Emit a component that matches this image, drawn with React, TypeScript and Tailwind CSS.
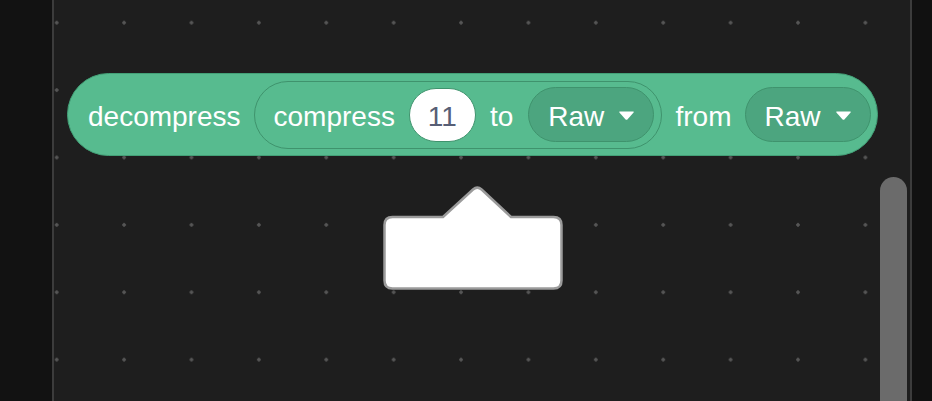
const font = { fontFamily: '"Liberation Sans", Arial, sans-serif' };

function Caret() {
  return (
    <svg width="17" height="11" viewBox="0 0 17 11" className="shrink-0">
      <path d="M2 1.5 H15 Q16.5 1.5 15.4 2.8 L9.6 9.2 Q8.5 10.3 7.4 9.2 L1.6 2.8 Q0.5 1.5 2 1.5 Z" fill="#ffffff" />
    </svg>
  );
}

function Label({ children, className = "" }: { children: string; className?: string }) {
  return <span className={`translate-y-[2px] text-[28px] leading-none text-white ${className}`}>{children}</span>;
}

function Dropdown({ label }: { label: string }) {
  return (
    <div className="flex h-[55px] w-[126px] shrink-0 items-center rounded-full border border-[#3f936d] bg-[#4ca57f] pl-[19px]">
      <Label>{label}</Label>
      <span className="ml-[14px] translate-y-[1px]">
        <Caret />
      </span>
    </div>
  );
}

export default function App() {
  return (
    <div className="flex h-[401px] w-[932px] overflow-hidden bg-[#111111]" style={font}>
      <div className="w-[52px] shrink-0 bg-[#121212]" />
      <div className="w-[2px] shrink-0 bg-[#3c3c3c]" />
      <div className="relative flex-1 overflow-hidden bg-[#1e1e1e] bg-[radial-gradient(circle,#565656_1.5px,transparent_1.9px)] bg-[length:67.4px_67.4px] bg-[position:-31px_-11px]">
        <div className="pl-[13px] pt-[73px]">
          <div className="flex h-[83px] w-[811px] items-center rounded-full border border-[#43a077] bg-[#57bb8f] pl-[20px]">
            <Label>decompress</Label>
            <div className="ml-[13px] flex h-[68px] w-[408px] shrink-0 items-center rounded-full border border-[#3f936d] bg-[#57bb8f] pl-[19px]">
              <Label>compress</Label>
              <div className="ml-[14px] flex h-[54px] w-[67px] shrink-0 items-center justify-center rounded-full border border-[#3f936d] bg-white">
                <span className="translate-y-[2px] text-[28px] leading-none text-[#575e75]">11</span>
              </div>
              <Label className="ml-[14px]">to</Label>
              <div className="ml-[15px]">
                <Dropdown label="Raw" />
              </div>
            </div>
            <Label className="ml-[14px]">from</Label>
            <div className="ml-[13px]">
              <Dropdown label="Raw" />
            </div>
          </div>
        </div>

        <svg width="182" height="108" viewBox="0 0 182 108" className="absolute left-[328px] top-[184px]">
          <path
            d="M10.5 33 H61 L91 5.5 Q95.3 1.8 99.6 5.5 L129 33 H171.5 Q179.5 33 179.5 41 V96.5 Q179.5 104.5 171.5 104.5 H10.5 Q2.5 104.5 2.5 96.5 V41 Q2.5 33 10.5 33 Z"
            fill="#ffffff"
            stroke="#9b9b9b"
            strokeWidth="2.5"
          />
        </svg>

        <div className="absolute right-[3px] top-[177px] h-[240px] w-[27px] rounded-t-[14px] bg-[#6b6b6b]" />
      </div>
      <div className="w-[2px] shrink-0 bg-[#3c3c3c]" />
      <div className="w-[20px] shrink-0 bg-[#111111]" />
    </div>
  );
}
